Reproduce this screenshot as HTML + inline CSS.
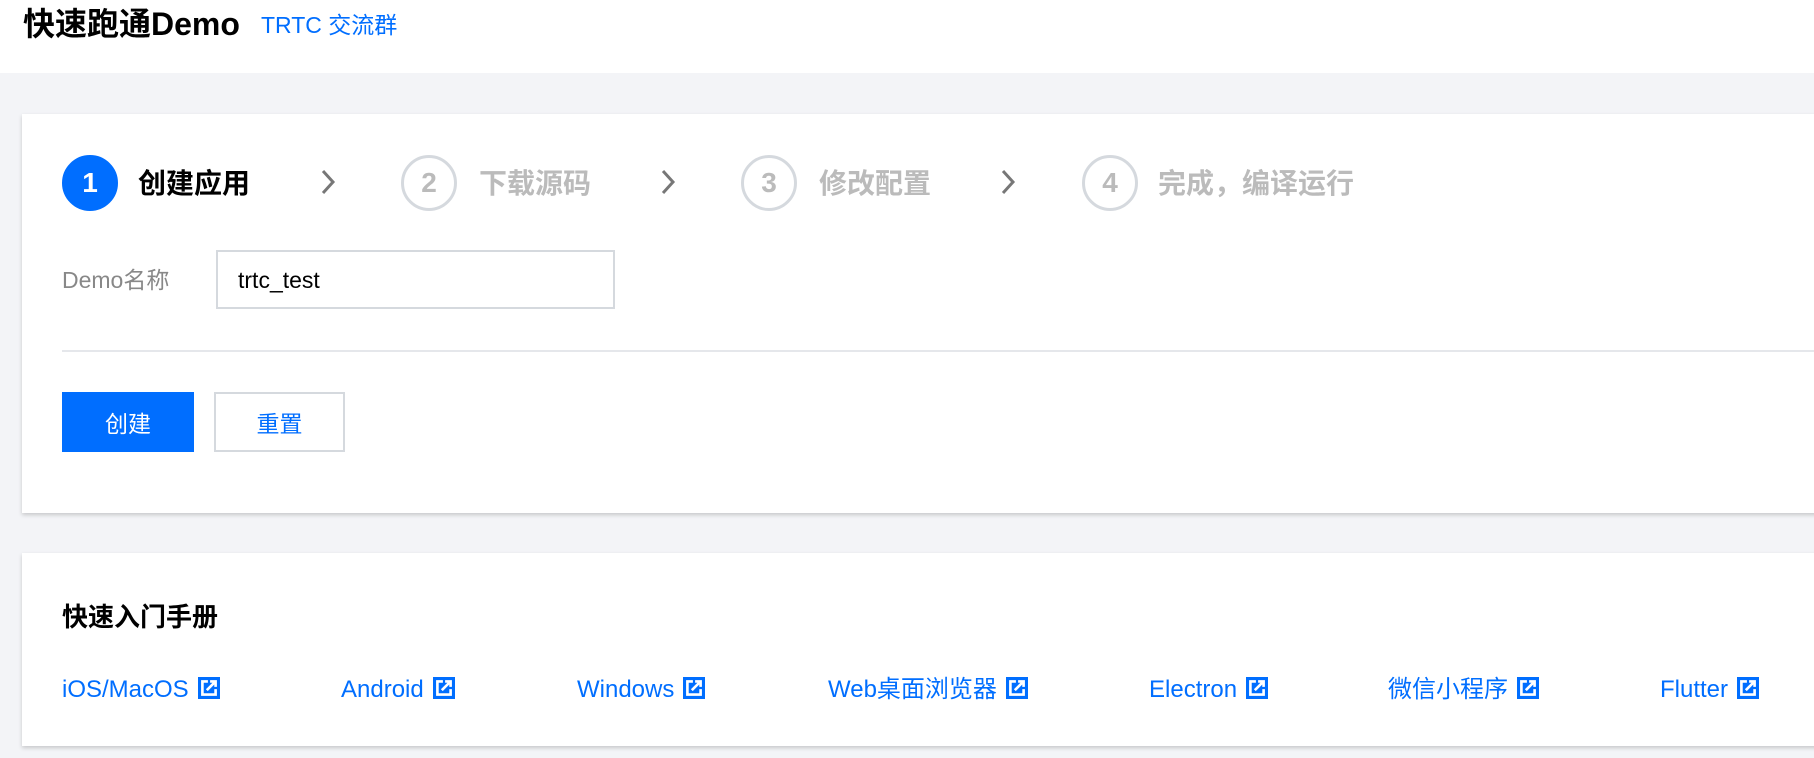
<!DOCTYPE html>
<html><head><meta charset="utf-8"><style>
*{margin:0;padding:0;box-sizing:border-box}
body{width:1814px;height:758px;background:#f3f4f7;font-family:"Liberation Sans","Noto Sans CJK SC",sans-serif;position:relative;overflow:hidden}
.a{position:absolute;white-space:nowrap}
.hdr{position:absolute;left:0;top:0;width:1814px;height:73px;background:#fff}
.card{position:absolute;left:22px;right:-10px;background:#fff;box-shadow:0 2px 4px rgba(0,0,0,.18)}
.circ{position:absolute;width:56px;height:56px;border-radius:50%;border:3px solid #d5d9de;color:#bbb;font-size:28px;font-weight:bold;display:flex;align-items:center;justify-content:center;top:155px}
.stxt{position:absolute;top:168px;font-size:28px;font-weight:bold;color:#bbb;line-height:32px;white-space:nowrap}
.chev{position:absolute;top:168px;width:16px;height:28px}
.lnk{position:absolute;top:676px;font-size:24px;color:#006eff;line-height:28px;white-space:nowrap}
.ic{display:inline-block;width:22px;height:22px;vertical-align:-2px;margin-left:9px}
</style></head><body>
<div class="hdr"></div>
<div class="a" style="left:23px;top:5px;font-size:32px;font-weight:bold;color:#000;line-height:38px">快速跑通Demo</div>
<div class="a" style="left:261px;top:11px;font-size:23px;color:#006eff;line-height:28px">TRTC 交流群</div>

<div class="card" style="top:114px;height:399px"></div>
<div class="circ" style="left:62px;background:#006eff;border-color:#006eff;color:#fff">1</div>
<div class="stxt" style="left:138px;color:#000">创建应用</div>
<svg class="chev" style="left:320px" viewBox="0 0 16 28"><path d="M3 3 L13 14 L3 25" fill="none" stroke="#777" stroke-width="3"/></svg>
<div class="circ" style="left:401px">2</div>
<div class="stxt" style="left:479px">下载源码</div>
<svg class="chev" style="left:660px" viewBox="0 0 16 28"><path d="M3 3 L13 14 L3 25" fill="none" stroke="#777" stroke-width="3"/></svg>
<div class="circ" style="left:741px">3</div>
<div class="stxt" style="left:819px">修改配置</div>
<svg class="chev" style="left:1000px" viewBox="0 0 16 28"><path d="M3 3 L13 14 L3 25" fill="none" stroke="#777" stroke-width="3"/></svg>
<div class="circ" style="left:1082px">4</div>
<div class="stxt" style="left:1158px">完成，编译运行</div>

<div class="a" style="left:62px;top:266px;font-size:23px;color:#888;line-height:28px">Demo名称</div>
<div class="a" style="left:216px;top:250px;width:399px;height:59px;border:2px solid #d5d9de;background:#fff"></div>
<div class="a" style="left:238px;top:266px;font-size:23px;color:#000;line-height:28px">trtc_test</div>
<div class="a" style="left:62px;top:350px;right:0;height:2px;background:#e5e7eb"></div>
<div class="a" style="left:62px;top:392px;width:132px;height:60px;background:#006eff;color:#fff;font-size:23px;display:flex;align-items:center;justify-content:center">创建</div>
<div class="a" style="left:214px;top:392px;width:131px;height:60px;border:2px solid #d5d9de;color:#006eff;font-size:23px;display:flex;align-items:center;justify-content:center">重置</div>

<div class="card" style="top:553px;height:193px"></div>
<div class="a" style="left:62px;top:601px;font-size:26px;font-weight:bold;color:#000;line-height:32px">快速入门手册</div>

<div class="lnk" style="left:62px">iOS/MacOS<svg class="ic" viewBox="0 0 20 20"><rect width="20" height="20" fill="#006eff"/><path d="M9 4H4v12h12v-5" fill="none" stroke="#fff" stroke-width="2.4"/><path d="M8 12L15 5M11 4h5v5" fill="none" stroke="#fff" stroke-width="2.4"/></svg></div>
<div class="lnk" style="left:341px">Android<svg class="ic" viewBox="0 0 20 20"><rect width="20" height="20" fill="#006eff"/><path d="M9 4H4v12h12v-5" fill="none" stroke="#fff" stroke-width="2.4"/><path d="M8 12L15 5M11 4h5v5" fill="none" stroke="#fff" stroke-width="2.4"/></svg></div>
<div class="lnk" style="left:577px">Windows<svg class="ic" viewBox="0 0 20 20"><rect width="20" height="20" fill="#006eff"/><path d="M9 4H4v12h12v-5" fill="none" stroke="#fff" stroke-width="2.4"/><path d="M8 12L15 5M11 4h5v5" fill="none" stroke="#fff" stroke-width="2.4"/></svg></div>
<div class="lnk" style="left:828px">Web桌面浏览器<svg class="ic" viewBox="0 0 20 20"><rect width="20" height="20" fill="#006eff"/><path d="M9 4H4v12h12v-5" fill="none" stroke="#fff" stroke-width="2.4"/><path d="M8 12L15 5M11 4h5v5" fill="none" stroke="#fff" stroke-width="2.4"/></svg></div>
<div class="lnk" style="left:1149px">Electron<svg class="ic" viewBox="0 0 20 20"><rect width="20" height="20" fill="#006eff"/><path d="M9 4H4v12h12v-5" fill="none" stroke="#fff" stroke-width="2.4"/><path d="M8 12L15 5M11 4h5v5" fill="none" stroke="#fff" stroke-width="2.4"/></svg></div>
<div class="lnk" style="left:1388px">微信小程序<svg class="ic" viewBox="0 0 20 20"><rect width="20" height="20" fill="#006eff"/><path d="M9 4H4v12h12v-5" fill="none" stroke="#fff" stroke-width="2.4"/><path d="M8 12L15 5M11 4h5v5" fill="none" stroke="#fff" stroke-width="2.4"/></svg></div>
<div class="lnk" style="left:1660px">Flutter<svg class="ic" viewBox="0 0 20 20"><rect width="20" height="20" fill="#006eff"/><path d="M9 4H4v12h12v-5" fill="none" stroke="#fff" stroke-width="2.4"/><path d="M8 12L15 5M11 4h5v5" fill="none" stroke="#fff" stroke-width="2.4"/></svg></div>
</body></html>
